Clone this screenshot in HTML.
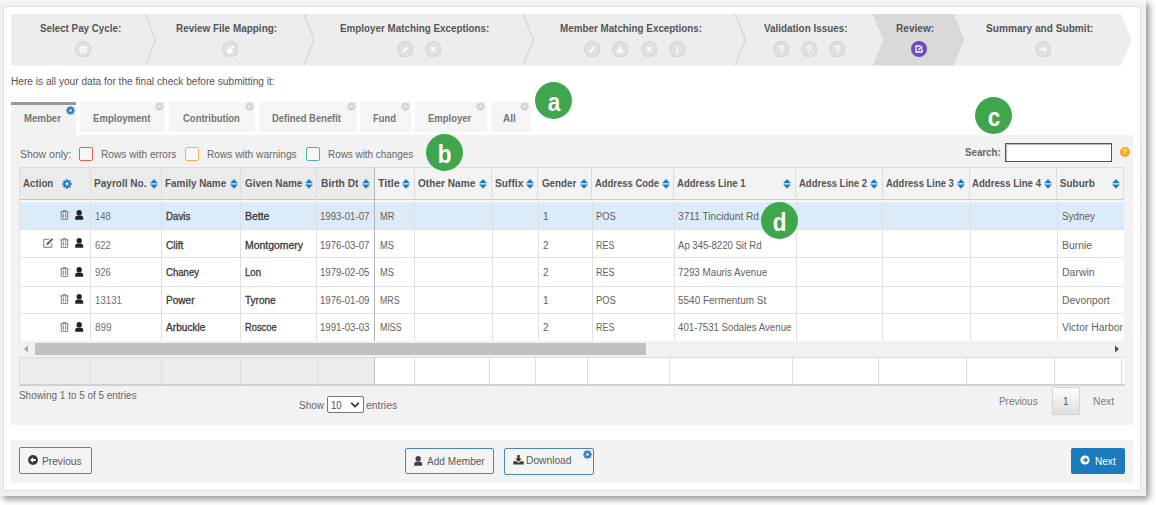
<!DOCTYPE html><html><head><meta charset="utf-8"><style>
*{box-sizing:border-box}
html,body{margin:0;padding:0}
body{width:1156px;height:505px;overflow:hidden;background:#fff;position:relative;font-family:"Liberation Sans",sans-serif;color:#555}
.a{position:absolute}
.t{position:absolute;white-space:nowrap;line-height:10px;font-size:10px}
.b{font-weight:bold}
</style></head><body><div class="a" style="left:0px;top:0px;width:1146px;height:496px;background:linear-gradient(#f9f9f9 0px,#f2f2f2 3.5px,#f1f1f1 6px);box-shadow:3px 3px 7px rgba(0,0,0,.45)"></div>
<div class="a" style="left:3px;top:6px;width:1138px;height:485px;background:#fff;border:1px solid #e0e0e0"></div>
<svg class="a" style="left:0;top:0" width="1156" height="80"><polygon points="11,14 1121.2,14 1131.6,39.75 1121.2,65.5 11,65.5" fill="#ededed"/><polygon points="872.8,14 954,14 964.3,39.75 954,65.5 872.8,65.5 883.1,39.75" fill="#d9d9d9"/><polyline points="145.2,14 155.5,39.75 145.2,65.5" fill="none" stroke="#cfcfcf" stroke-width="1"/><polyline points="303.9,14 314.2,39.75 303.9,65.5" fill="none" stroke="#cfcfcf" stroke-width="1"/><polyline points="523.1,14 533.4,39.75 523.1,65.5" fill="none" stroke="#cfcfcf" stroke-width="1"/><polyline points="735.2,14 745.5,39.75 735.2,65.5" fill="none" stroke="#cfcfcf" stroke-width="1"/></svg>
<div class="t" style="left:39.6px;top:24.2px;font-size:10px;line-height:10px;font-weight:bold;color:#555;transform:scaleX(0.9803);transform-origin:0 0;">Select Pay Cycle:</div>
<div class="t" style="left:175.9px;top:24.2px;font-size:10px;line-height:10px;font-weight:bold;color:#555;transform:scaleX(0.9942);transform-origin:0 0;">Review File Mapping:</div>
<div class="t" style="left:340.4px;top:24.2px;font-size:10px;line-height:10px;font-weight:bold;color:#555;transform:scaleX(0.9835);transform-origin:0 0;">Employer Matching Exceptions:</div>
<div class="t" style="left:559.9px;top:24.2px;font-size:10px;line-height:10px;font-weight:bold;color:#555;transform:scaleX(0.9836);transform-origin:0 0;">Member Matching Exceptions:</div>
<div class="t" style="left:763.9px;top:24.2px;font-size:10px;line-height:10px;font-weight:bold;color:#555;transform:scaleX(0.9883);transform-origin:0 0;">Validation Issues:</div>
<div class="t" style="left:896.4px;top:24.2px;font-size:10px;line-height:10px;font-weight:bold;color:#555;transform:scaleX(1.0080);transform-origin:0 0;">Review:</div>
<div class="t" style="left:985.9px;top:24.2px;font-size:10px;line-height:10px;font-weight:bold;color:#555;transform:scaleX(1.0119);transform-origin:0 0;">Summary and Submit:</div>
<svg class="a" style="left:75.25px;top:40.65px" width="16.5" height="16.5" viewBox="-0.25 -0.25 16.5 16.5"><circle cx="8" cy="8" r="7.7" fill="#e0e0e0" stroke="#d4d4d4" stroke-width="1.1"/><rect x="4.5" y="5" width="7" height="6.5" fill="#fff"/><path d="M4.5 7.3h7M6.8 7.3v4.2M9.2 7.3v4.2M4.5 9.4h7" stroke="#e1e1e1" stroke-width="0.6"/></svg>
<svg class="a" style="left:221.75px;top:40.65px" width="16.5" height="16.5" viewBox="-0.25 -0.25 16.5 16.5"><circle cx="8" cy="8" r="7.7" fill="#e0e0e0" stroke="#d4d4d4" stroke-width="1.1"/><path d="M5 11.5l2-2M6.5 10.5l-1-1 1.5-3 3.5 3.5-3 1.5zM9 6l1.5-1.5M10 7l1.5-1.5" stroke="#fff" stroke-width="1.3" fill="#fff"/></svg>
<svg class="a" style="left:396.85px;top:40.65px" width="16.5" height="16.5" viewBox="-0.25 -0.25 16.5 16.5"><circle cx="8" cy="8" r="7.7" fill="#e0e0e0" stroke="#d4d4d4" stroke-width="1.1"/><path d="M5 11.2l0.5-2 4-4 1.5 1.5-4 4z" fill="#fff"/></svg>
<svg class="a" style="left:424.85px;top:40.65px" width="16.5" height="16.5" viewBox="-0.25 -0.25 16.5 16.5"><circle cx="8" cy="8" r="7.7" fill="#e0e0e0" stroke="#d4d4d4" stroke-width="1.1"/><path d="M6 6l4 4M10 6l-4 4" stroke="#fff" stroke-width="1.5"/></svg>
<svg class="a" style="left:583.65px;top:40.65px" width="16.5" height="16.5" viewBox="-0.25 -0.25 16.5 16.5"><circle cx="8" cy="8" r="7.7" fill="#e0e0e0" stroke="#d4d4d4" stroke-width="1.1"/><path d="M5 11.2l0.5-2 4-4 1.5 1.5-4 4z" fill="#fff"/></svg>
<svg class="a" style="left:611.95px;top:40.65px" width="16.5" height="16.5" viewBox="-0.25 -0.25 16.5 16.5"><circle cx="8" cy="8" r="7.7" fill="#e0e0e0" stroke="#d4d4d4" stroke-width="1.1"/><path d="M8 4.5l3.8 6.8H4.2z" fill="#fff"/><path d="M8 7v2" stroke="#e1e1e1" stroke-width="0.9"/></svg>
<svg class="a" style="left:640.55px;top:40.65px" width="16.5" height="16.5" viewBox="-0.25 -0.25 16.5 16.5"><circle cx="8" cy="8" r="7.7" fill="#e0e0e0" stroke="#d4d4d4" stroke-width="1.1"/><path d="M6 6l4 4M10 6l-4 4" stroke="#fff" stroke-width="1.5"/></svg>
<svg class="a" style="left:669.05px;top:40.65px" width="16.5" height="16.5" viewBox="-0.25 -0.25 16.5 16.5"><circle cx="8" cy="8" r="7.7" fill="#e0e0e0" stroke="#d4d4d4" stroke-width="1.1"/><circle cx="8" cy="5.3" r="0.9" fill="#fff"/><rect x="7.2" y="7" width="1.6" height="4.5" fill="#fff"/></svg>
<svg class="a" style="left:772.85px;top:40.65px" width="16.5" height="16.5" viewBox="-0.25 -0.25 16.5 16.5"><circle cx="8" cy="8" r="7.7" fill="#e0e0e0" stroke="#d4d4d4" stroke-width="1.1"/><path d="M6.4 6.6a1.7 1.7 0 1 1 2.4 1.5c-0.6 0.3-0.8 0.6-0.8 1.2" fill="none" stroke="#fff" stroke-width="1.3"/><circle cx="8" cy="11" r="0.8" fill="#fff"/></svg>
<svg class="a" style="left:800.95px;top:40.65px" width="16.5" height="16.5" viewBox="-0.25 -0.25 16.5 16.5"><circle cx="8" cy="8" r="7.7" fill="#e0e0e0" stroke="#d4d4d4" stroke-width="1.1"/><path d="M6.4 6.6a1.7 1.7 0 1 1 2.4 1.5c-0.6 0.3-0.8 0.6-0.8 1.2" fill="none" stroke="#fff" stroke-width="1.3"/><circle cx="8" cy="11" r="0.8" fill="#fff"/></svg>
<svg class="a" style="left:828.95px;top:40.65px" width="16.5" height="16.5" viewBox="-0.25 -0.25 16.5 16.5"><circle cx="8" cy="8" r="7.7" fill="#e0e0e0" stroke="#d4d4d4" stroke-width="1.1"/><path d="M6.4 6.6a1.7 1.7 0 1 1 2.4 1.5c-0.6 0.3-0.8 0.6-0.8 1.2" fill="none" stroke="#fff" stroke-width="1.3"/><circle cx="8" cy="11" r="0.8" fill="#fff"/></svg>
<svg class="a" style="left:1034.85px;top:40.65px" width="16.5" height="16.5" viewBox="-0.25 -0.25 16.5 16.5"><circle cx="8" cy="8" r="7.7" fill="#e0e0e0" stroke="#d4d4d4" stroke-width="1.1"/><path d="M4.5 8h6M8.5 6l2 2-2 2" fill="none" stroke="#fff" stroke-width="1.5"/></svg>
<svg class="a" style="left:910.8px;top:41px" width="16" height="16" viewBox="0 0 16 16"><circle cx="8" cy="8" r="8" fill="#6a4dc4"/><path d="M9.5 5H5v6h6V7.5" fill="none" stroke="#fff" stroke-width="1.3"/><path d="M7 9.5l0.4-1.4 3.4-3.4 1 1-3.4 3.4z" fill="#fff"/></svg>
<div class="t" style="left:11.3px;top:77.2px;font-size:10px;line-height:10px;color:#555;transform:scaleX(1.0137);transform-origin:0 0;">Here is all your data for the final check before submitting it:</div>
<div class="a" style="left:11px;top:101.7px;width:65px;height:3px;background:#999"></div>
<div class="a" style="left:11px;top:104.7px;width:65px;height:31px;background:#f2f2f2"></div>
<div class="a" style="left:80px;top:102px;width:85px;height:30px;background:#f5f5f5"></div>
<div class="a" style="left:154.7px;top:102.2px;line-height:0"><svg width="9" height="9" viewBox="0 0 10 10"><g fill="#d2d2d2"><circle cx="5" cy="5" r="3.6"/><rect x="4" y="0.2" width="2" height="9.6" transform="rotate(0 5 5)"/><rect x="4" y="0.2" width="2" height="9.6" transform="rotate(45 5 5)"/><rect x="4" y="0.2" width="2" height="9.6" transform="rotate(90 5 5)"/><rect x="4" y="0.2" width="2" height="9.6" transform="rotate(135 5 5)"/></g><circle cx="5" cy="5" r="1.5" fill="#f5f5f5"/></svg></div>
<div class="a" style="left:169px;top:102px;width:86px;height:30px;background:#f5f5f5"></div>
<div class="a" style="left:244.7px;top:102.2px;line-height:0"><svg width="9" height="9" viewBox="0 0 10 10"><g fill="#d2d2d2"><circle cx="5" cy="5" r="3.6"/><rect x="4" y="0.2" width="2" height="9.6" transform="rotate(0 5 5)"/><rect x="4" y="0.2" width="2" height="9.6" transform="rotate(45 5 5)"/><rect x="4" y="0.2" width="2" height="9.6" transform="rotate(90 5 5)"/><rect x="4" y="0.2" width="2" height="9.6" transform="rotate(135 5 5)"/></g><circle cx="5" cy="5" r="1.5" fill="#f5f5f5"/></svg></div>
<div class="a" style="left:259px;top:102px;width:98px;height:30px;background:#f5f5f5"></div>
<div class="a" style="left:346.7px;top:102.2px;line-height:0"><svg width="9" height="9" viewBox="0 0 10 10"><g fill="#d2d2d2"><circle cx="5" cy="5" r="3.6"/><rect x="4" y="0.2" width="2" height="9.6" transform="rotate(0 5 5)"/><rect x="4" y="0.2" width="2" height="9.6" transform="rotate(45 5 5)"/><rect x="4" y="0.2" width="2" height="9.6" transform="rotate(90 5 5)"/><rect x="4" y="0.2" width="2" height="9.6" transform="rotate(135 5 5)"/></g><circle cx="5" cy="5" r="1.5" fill="#f5f5f5"/></svg></div>
<div class="a" style="left:360px;top:102px;width:51px;height:30px;background:#f5f5f5"></div>
<div class="a" style="left:400.7px;top:102.2px;line-height:0"><svg width="9" height="9" viewBox="0 0 10 10"><g fill="#d2d2d2"><circle cx="5" cy="5" r="3.6"/><rect x="4" y="0.2" width="2" height="9.6" transform="rotate(0 5 5)"/><rect x="4" y="0.2" width="2" height="9.6" transform="rotate(45 5 5)"/><rect x="4" y="0.2" width="2" height="9.6" transform="rotate(90 5 5)"/><rect x="4" y="0.2" width="2" height="9.6" transform="rotate(135 5 5)"/></g><circle cx="5" cy="5" r="1.5" fill="#f5f5f5"/></svg></div>
<div class="a" style="left:414.5px;top:102px;width:72px;height:30px;background:#f5f5f5"></div>
<div class="a" style="left:476.2px;top:102.2px;line-height:0"><svg width="9" height="9" viewBox="0 0 10 10"><g fill="#d2d2d2"><circle cx="5" cy="5" r="3.6"/><rect x="4" y="0.2" width="2" height="9.6" transform="rotate(0 5 5)"/><rect x="4" y="0.2" width="2" height="9.6" transform="rotate(45 5 5)"/><rect x="4" y="0.2" width="2" height="9.6" transform="rotate(90 5 5)"/><rect x="4" y="0.2" width="2" height="9.6" transform="rotate(135 5 5)"/></g><circle cx="5" cy="5" r="1.5" fill="#f5f5f5"/></svg></div>
<div class="a" style="left:490.5px;top:102px;width:40px;height:30px;background:#f5f5f5"></div>
<div class="a" style="left:520.2px;top:102.2px;line-height:0"><svg width="9" height="9" viewBox="0 0 10 10"><g fill="#d2d2d2"><circle cx="5" cy="5" r="3.6"/><rect x="4" y="0.2" width="2" height="9.6" transform="rotate(0 5 5)"/><rect x="4" y="0.2" width="2" height="9.6" transform="rotate(45 5 5)"/><rect x="4" y="0.2" width="2" height="9.6" transform="rotate(90 5 5)"/><rect x="4" y="0.2" width="2" height="9.6" transform="rotate(135 5 5)"/></g><circle cx="5" cy="5" r="1.5" fill="#f5f5f5"/></svg></div>
<div class="t" style="left:24.4px;top:114.2px;font-size:10px;line-height:10px;font-weight:bold;color:#767676;transform:scaleX(0.9620);transform-origin:0 0;">Member</div>
<div class="t" style="left:93.30000000000001px;top:114.2px;font-size:10px;line-height:10px;font-weight:bold;color:#767676;transform:scaleX(0.9564);transform-origin:0 0;">Employment</div>
<div class="t" style="left:182.70000000000002px;top:114.2px;font-size:10px;line-height:10px;font-weight:bold;color:#767676;transform:scaleX(0.9486);transform-origin:0 0;">Contribution</div>
<div class="t" style="left:272.4px;top:114.2px;font-size:10px;line-height:10px;font-weight:bold;color:#767676;transform:scaleX(0.9408);transform-origin:0 0;">Defined Benefit</div>
<div class="t" style="left:373.09999999999997px;top:114.2px;font-size:10px;line-height:10px;font-weight:bold;color:#767676;transform:scaleX(0.9412);transform-origin:0 0;">Fund</div>
<div class="t" style="left:428.09999999999997px;top:114.2px;font-size:10px;line-height:10px;font-weight:bold;color:#767676;transform:scaleX(0.9500);transform-origin:0 0;">Employer</div>
<div class="t" style="left:503.09999999999997px;top:114.2px;font-size:10px;line-height:10px;font-weight:bold;color:#767676;transform:scaleX(1.0015);transform-origin:0 0;">All</div>
<div class="a" style="left:65.8px;top:106.2px;line-height:0"><svg width="9" height="9" viewBox="0 0 10 10"><g fill="#2a7fc4"><circle cx="5" cy="5" r="3.6"/><rect x="4" y="0.2" width="2" height="9.6" transform="rotate(0 5 5)"/><rect x="4" y="0.2" width="2" height="9.6" transform="rotate(45 5 5)"/><rect x="4" y="0.2" width="2" height="9.6" transform="rotate(90 5 5)"/><rect x="4" y="0.2" width="2" height="9.6" transform="rotate(135 5 5)"/></g><circle cx="5" cy="5" r="1.5" fill="#f2f2f2"/></svg></div>
<div class="a" style="left:11px;top:135px;width:1122px;height:290px;background:#f2f2f2"></div>
<div class="a" style="left:11px;top:439.5px;width:1122px;height:43px;background:#f2f2f2"></div>
<div class="t" style="left:19.5px;top:150px;font-size:10px;line-height:10px;color:#666;transform:scaleX(1.0466);transform-origin:0 0;">Show only:</div>
<div class="a" style="left:79px;top:146.5px;width:14px;height:14px;border:1px solid #e0625c;border-radius:2px;background:#f7f7f7"></div>
<div class="t" style="left:101.2px;top:150px;font-size:10px;line-height:10px;color:#666;transform:scaleX(1.0125);transform-origin:0 0;">Rows with errors</div>
<div class="a" style="left:185.2px;top:146.5px;width:14px;height:14px;border:1px solid #f5b642;border-radius:2px;background:#f7f7f7"></div>
<div class="t" style="left:207.3px;top:150px;font-size:10px;line-height:10px;color:#666;transform:scaleX(1.0150);transform-origin:0 0;">Rows with warnings</div>
<div class="a" style="left:306px;top:146.5px;width:14px;height:14px;border:1px solid #4fb5a0;border-radius:2px;background:#f7f7f7"></div>
<div class="t" style="left:327.7px;top:150px;font-size:10px;line-height:10px;color:#666;transform:scaleX(0.9901);transform-origin:0 0;">Rows with changes</div>
<div class="t" style="left:965px;top:148px;font-size:10px;line-height:10px;font-weight:bold;color:#666;transform:scaleX(0.9731);transform-origin:0 0;">Search:</div>
<div class="a" style="left:1005px;top:143px;width:107px;height:19px;background:#fff;border:1px solid #555;box-shadow:inset 1px 1px 1px rgba(0,0,0,.3)"></div>
<div class="a" style="left:1120px;top:147px;width:10px;height:10px;border-radius:50%;background:#f8a91c;color:#fff;font:bold 8px/10px 'Liberation Sans';text-align:center">?</div>
<div class="a" style="left:19px;top:167px;width:355px;height:33px;background:#ebebeb"></div>
<div class="a" style="left:374px;top:167px;width:750px;height:33px;background:#f3f3f3"></div>
<div class="a" style="left:19px;top:167px;width:1105px;height:1px;background:#dcdcdc"></div>
<div class="a" style="left:19px;top:198.8px;width:1105px;height:1.7px;background:#c9c9c9"></div>
<div class="a" style="left:19px;top:200.5px;width:1105px;height:140.5px;background:#fff"></div>
<div class="a" style="left:19px;top:202px;width:1105px;height:27px;background:#dcebf8"></div>
<div class="a" style="left:19px;top:229px;width:1105px;height:1px;background:#e2e2e2"></div>
<div class="a" style="left:19px;top:257px;width:1105px;height:1px;background:#e2e2e2"></div>
<div class="a" style="left:19px;top:286px;width:1105px;height:1px;background:#e2e2e2"></div>
<div class="a" style="left:19px;top:313px;width:1105px;height:1px;background:#e2e2e2"></div>
<div class="a" style="left:19px;top:167px;width:1px;height:33px;background:#dddddd"></div>
<div class="a" style="left:90px;top:167px;width:1px;height:33px;background:#dddddd"></div>
<div class="a" style="left:161px;top:167px;width:1px;height:33px;background:#dddddd"></div>
<div class="a" style="left:240px;top:167px;width:1px;height:33px;background:#dddddd"></div>
<div class="a" style="left:316px;top:167px;width:1px;height:33px;background:#dddddd"></div>
<div class="a" style="left:374px;top:167px;width:1px;height:33px;background:#dddddd"></div>
<div class="a" style="left:414px;top:167px;width:1px;height:33px;background:#dddddd"></div>
<div class="a" style="left:491px;top:167px;width:1px;height:33px;background:#dddddd"></div>
<div class="a" style="left:537px;top:167px;width:1px;height:33px;background:#dddddd"></div>
<div class="a" style="left:591px;top:167px;width:1px;height:33px;background:#dddddd"></div>
<div class="a" style="left:673px;top:167px;width:1px;height:33px;background:#dddddd"></div>
<div class="a" style="left:795px;top:167px;width:1px;height:33px;background:#dddddd"></div>
<div class="a" style="left:882px;top:167px;width:1px;height:33px;background:#dddddd"></div>
<div class="a" style="left:969px;top:167px;width:1px;height:33px;background:#dddddd"></div>
<div class="a" style="left:1056px;top:167px;width:1px;height:33px;background:#dddddd"></div>
<div class="a" style="left:19px;top:200.5px;width:1px;height:140.5px;background:#e0e0e0"></div>
<div class="a" style="left:90px;top:200.5px;width:1px;height:140.5px;background:#e0e0e0"></div>
<div class="a" style="left:161px;top:200.5px;width:1px;height:140.5px;background:#e0e0e0"></div>
<div class="a" style="left:240px;top:200.5px;width:1px;height:140.5px;background:#e0e0e0"></div>
<div class="a" style="left:316px;top:200.5px;width:1px;height:140.5px;background:#e0e0e0"></div>
<div class="a" style="left:374px;top:200.5px;width:1px;height:140.5px;background:#e0e0e0"></div>
<div class="a" style="left:414px;top:200.5px;width:1px;height:140.5px;background:#e0e0e0"></div>
<div class="a" style="left:492px;top:200.5px;width:1px;height:140.5px;background:#e0e0e0"></div>
<div class="a" style="left:538px;top:200.5px;width:1px;height:140.5px;background:#e0e0e0"></div>
<div class="a" style="left:592px;top:200.5px;width:1px;height:140.5px;background:#e0e0e0"></div>
<div class="a" style="left:673.5px;top:200.5px;width:1px;height:140.5px;background:#e0e0e0"></div>
<div class="a" style="left:796px;top:200.5px;width:1px;height:140.5px;background:#e0e0e0"></div>
<div class="a" style="left:882px;top:200.5px;width:1px;height:140.5px;background:#e0e0e0"></div>
<div class="a" style="left:969.5px;top:200.5px;width:1px;height:140.5px;background:#e0e0e0"></div>
<div class="a" style="left:1056.5px;top:200.5px;width:1px;height:140.5px;background:#e0e0e0"></div>
<div class="a" style="left:373.5px;top:167px;width:1.5px;height:174px;background:#b5b5b5"></div>
<div class="a" style="left:1123px;top:167px;width:1px;height:33px;background:#dddddd"></div>
<div class="t" style="left:23.3px;top:179px;font-size:10px;line-height:10px;font-weight:bold;color:#555;transform:scaleX(0.9740);transform-origin:0 0;">Action</div>
<div class="t" style="left:94.2px;top:179px;font-size:10px;line-height:10px;font-weight:bold;color:#555;transform:scaleX(1.0057);transform-origin:0 0;">Payroll No.</div>
<div class="a" style="left:149.7px;top:178.5px;width:8px;height:10px;line-height:0"><svg width="8" height="10" viewBox="0 0 8 10"><polygon points="0,4.2 4,0 8,4.2" fill="#1f7dc4"/><polygon points="0,5.5 8,5.5 4,9.7" fill="#1f7dc4"/></svg></div>
<div class="t" style="left:165.1px;top:179px;font-size:10px;line-height:10px;font-weight:bold;color:#555;transform:scaleX(0.9918);transform-origin:0 0;">Family Name</div>
<div class="a" style="left:229.6px;top:178.5px;width:8px;height:10px;line-height:0"><svg width="8" height="10" viewBox="0 0 8 10"><polygon points="0,4.2 4,0 8,4.2" fill="#1f7dc4"/><polygon points="0,5.5 8,5.5 4,9.7" fill="#1f7dc4"/></svg></div>
<div class="t" style="left:245.1px;top:179px;font-size:10px;line-height:10px;font-weight:bold;color:#555;transform:scaleX(0.9894);transform-origin:0 0;">Given Name</div>
<div class="a" style="left:305.4px;top:178.5px;width:8px;height:10px;line-height:0"><svg width="8" height="10" viewBox="0 0 8 10"><polygon points="0,4.2 4,0 8,4.2" fill="#1f7dc4"/><polygon points="0,5.5 8,5.5 4,9.7" fill="#1f7dc4"/></svg></div>
<div class="t" style="left:320.9px;top:179px;font-size:10px;line-height:10px;font-weight:bold;color:#555;transform:scaleX(1.0226);transform-origin:0 0;">Birth Dt</div>
<div class="a" style="left:362.4px;top:178.5px;width:8px;height:10px;line-height:0"><svg width="8" height="10" viewBox="0 0 8 10"><polygon points="0,4.2 4,0 8,4.2" fill="#1f7dc4"/><polygon points="0,5.5 8,5.5 4,9.7" fill="#1f7dc4"/></svg></div>
<div class="t" style="left:378.1px;top:179px;font-size:10px;line-height:10px;font-weight:bold;color:#555;transform:scaleX(1.0691);transform-origin:0 0;">Title</div>
<div class="a" style="left:402.4px;top:178.5px;width:8px;height:10px;line-height:0"><svg width="8" height="10" viewBox="0 0 8 10"><polygon points="0,4.2 4,0 8,4.2" fill="#1f7dc4"/><polygon points="0,5.5 8,5.5 4,9.7" fill="#1f7dc4"/></svg></div>
<div class="t" style="left:418.4px;top:179px;font-size:10px;line-height:10px;font-weight:bold;color:#555;transform:scaleX(1.0108);transform-origin:0 0;">Other Name</div>
<div class="a" style="left:479.2px;top:178.5px;width:8px;height:10px;line-height:0"><svg width="8" height="10" viewBox="0 0 8 10"><polygon points="0,4.2 4,0 8,4.2" fill="#1f7dc4"/><polygon points="0,5.5 8,5.5 4,9.7" fill="#1f7dc4"/></svg></div>
<div class="t" style="left:494.9px;top:179px;font-size:10px;line-height:10px;font-weight:bold;color:#555;transform:scaleX(1.0187);transform-origin:0 0;">Suffix</div>
<div class="a" style="left:526px;top:178.5px;width:8px;height:10px;line-height:0"><svg width="8" height="10" viewBox="0 0 8 10"><polygon points="0,4.2 4,0 8,4.2" fill="#1f7dc4"/><polygon points="0,5.5 8,5.5 4,9.7" fill="#1f7dc4"/></svg></div>
<div class="t" style="left:541.6px;top:179px;font-size:10px;line-height:10px;font-weight:bold;color:#555;transform:scaleX(0.9796);transform-origin:0 0;">Gender</div>
<div class="a" style="left:579.5px;top:178.5px;width:8px;height:10px;line-height:0"><svg width="8" height="10" viewBox="0 0 8 10"><polygon points="0,4.2 4,0 8,4.2" fill="#1f7dc4"/><polygon points="0,5.5 8,5.5 4,9.7" fill="#1f7dc4"/></svg></div>
<div class="t" style="left:595.1px;top:179px;font-size:10px;line-height:10px;font-weight:bold;color:#555;transform:scaleX(0.9440);transform-origin:0 0;">Address Code</div>
<div class="a" style="left:661.6px;top:178.5px;width:8px;height:10px;line-height:0"><svg width="8" height="10" viewBox="0 0 8 10"><polygon points="0,4.2 4,0 8,4.2" fill="#1f7dc4"/><polygon points="0,5.5 8,5.5 4,9.7" fill="#1f7dc4"/></svg></div>
<div class="t" style="left:677.1px;top:179px;font-size:10px;line-height:10px;font-weight:bold;color:#555;transform:scaleX(0.9567);transform-origin:0 0;">Address Line 1</div>
<div class="a" style="left:783px;top:178.5px;width:8px;height:10px;line-height:0"><svg width="8" height="10" viewBox="0 0 8 10"><polygon points="0,4.2 4,0 8,4.2" fill="#1f7dc4"/><polygon points="0,5.5 8,5.5 4,9.7" fill="#1f7dc4"/></svg></div>
<div class="t" style="left:798.5px;top:179px;font-size:10px;line-height:10px;font-weight:bold;color:#555;transform:scaleX(0.9484);transform-origin:0 0;">Address Line 2</div>
<div class="a" style="left:870.2px;top:178.5px;width:8px;height:10px;line-height:0"><svg width="8" height="10" viewBox="0 0 8 10"><polygon points="0,4.2 4,0 8,4.2" fill="#1f7dc4"/><polygon points="0,5.5 8,5.5 4,9.7" fill="#1f7dc4"/></svg></div>
<div class="t" style="left:885.9px;top:179px;font-size:10px;line-height:10px;font-weight:bold;color:#555;transform:scaleX(0.9470);transform-origin:0 0;">Address Line 3</div>
<div class="a" style="left:957.1px;top:178.5px;width:8px;height:10px;line-height:0"><svg width="8" height="10" viewBox="0 0 8 10"><polygon points="0,4.2 4,0 8,4.2" fill="#1f7dc4"/><polygon points="0,5.5 8,5.5 4,9.7" fill="#1f7dc4"/></svg></div>
<div class="t" style="left:972.3px;top:179px;font-size:10px;line-height:10px;font-weight:bold;color:#555;transform:scaleX(0.9623);transform-origin:0 0;">Address Line 4</div>
<div class="a" style="left:1044px;top:178.5px;width:8px;height:10px;line-height:0"><svg width="8" height="10" viewBox="0 0 8 10"><polygon points="0,4.2 4,0 8,4.2" fill="#1f7dc4"/><polygon points="0,5.5 8,5.5 4,9.7" fill="#1f7dc4"/></svg></div>
<div class="t" style="left:1059.8px;top:179px;font-size:10px;line-height:10px;font-weight:bold;color:#555;transform:scaleX(1.0000);transform-origin:0 0;">Suburb</div>
<div class="a" style="left:1111.5px;top:178.5px;width:8px;height:10px;line-height:0"><svg width="8" height="10" viewBox="0 0 8 10"><polygon points="0,4.2 4,0 8,4.2" fill="#1f7dc4"/><polygon points="0,5.5 8,5.5 4,9.7" fill="#1f7dc4"/></svg></div>
<div class="a" style="left:62px;top:179px;width:10px;height:10px;line-height:0"><svg width="10" height="10" viewBox="0 0 10 10"><g fill="#2a7fc4"><circle cx="5" cy="5" r="3.6"/><rect x="4" y="0.2" width="2" height="9.6" transform="rotate(0 5 5)"/><rect x="4" y="0.2" width="2" height="9.6" transform="rotate(45 5 5)"/><rect x="4" y="0.2" width="2" height="9.6" transform="rotate(90 5 5)"/><rect x="4" y="0.2" width="2" height="9.6" transform="rotate(135 5 5)"/></g><circle cx="5" cy="5" r="1.4" fill="#fff"/></svg></div>
<div class="a" style="left:60.2px;top:210.4px;line-height:0"><svg width="9" height="10" viewBox="0 0 9 10"><g fill="none" stroke="#6f6f6f" stroke-width="0.9"><path d="M0.3 1.9h8.4M3 1.9V0.6h3v1.3M1.3 1.9v7.2c0 0.3 0.2 0.5 0.5 0.5h5.4c0.3 0 0.5-0.2 0.5-0.5V1.9M3.3 3.4v4.8M5.7 3.4v4.8"/></g></svg></div>
<div class="a" style="left:74.6px;top:210.4px;line-height:0"><svg width="9" height="10" viewBox="0 0 9 10"><circle cx="4.2" cy="2.7" r="2.65" fill="#222"/><path d="M0.2 9.8V7.8C0.2 6.3 1.3 5.4 2.8 5.4h2.8c1.5 0 2.6 0.9 2.6 2.4v2z" fill="#222"/></svg></div>
<div class="t" style="left:94.5px;top:212px;font-size:10px;line-height:10px;color:#6e6e6e;transform:scaleX(0.9468);transform-origin:0 0;">148</div>
<div class="t" style="left:166.1px;top:212px;font-size:10px;line-height:10px;color:#3a3a3a;transform:scaleX(0.9754);transform-origin:0 0;-webkit-text-stroke:0.3px #3a3a3a;">Davis</div>
<div class="t" style="left:244.8px;top:212px;font-size:10px;line-height:10px;color:#3a3a3a;transform:scaleX(1.0403);transform-origin:0 0;-webkit-text-stroke:0.3px #3a3a3a;">Bette</div>
<div class="t" style="left:320.1px;top:212px;font-size:10px;line-height:10px;color:#626262;transform:scaleX(0.9657);transform-origin:0 0;">1993-01-07</div>
<div class="t" style="left:379.5px;top:212px;font-size:10px;line-height:10px;color:#626262;transform:scaleX(0.9253);transform-origin:0 0;">MR</div>
<div class="t" style="left:543px;top:212px;font-size:10px;line-height:10px;color:#626262;">1</div>
<div class="t" style="left:595.8px;top:212px;font-size:10px;line-height:10px;color:#626262;transform:scaleX(0.9325);transform-origin:0 0;">POS</div>
<div class="t" style="left:678.1px;top:212px;font-size:10px;line-height:10px;color:#626262;transform:scaleX(1.0141);transform-origin:0 0;">3711 Tincidunt Rd</div>
<div class="t" style="left:1061.8px;top:212px;font-size:10px;line-height:10px;color:#626262;transform:scaleX(0.9892);transform-origin:0 0;">Sydney</div>
<div class="a" style="left:60.2px;top:238.2px;line-height:0"><svg width="9" height="10" viewBox="0 0 9 10"><g fill="none" stroke="#6f6f6f" stroke-width="0.9"><path d="M0.3 1.9h8.4M3 1.9V0.6h3v1.3M1.3 1.9v7.2c0 0.3 0.2 0.5 0.5 0.5h5.4c0.3 0 0.5-0.2 0.5-0.5V1.9M3.3 3.4v4.8M5.7 3.4v4.8"/></g></svg></div>
<div class="a" style="left:74.6px;top:238.2px;line-height:0"><svg width="9" height="10" viewBox="0 0 9 10"><circle cx="4.2" cy="2.7" r="2.65" fill="#222"/><path d="M0.2 9.8V7.8C0.2 6.3 1.3 5.4 2.8 5.4h2.8c1.5 0 2.6 0.9 2.6 2.4v2z" fill="#222"/></svg></div>
<div class="a" style="left:43.2px;top:238.2px;line-height:0"><svg width="11" height="10" viewBox="0 0 11 10"><path d="M6 1.3H0.8v8h8V5.5" fill="none" stroke="#7a7a7a" stroke-width="1"/><path d="M3.2 7.2l0.5-2L8.9 0l1.5 1.5L5.2 6.7Z" fill="#6a6a6a"/></svg></div>
<div class="t" style="left:94.5px;top:241px;font-size:10px;line-height:10px;color:#6e6e6e;transform:scaleX(0.9468);transform-origin:0 0;">622</div>
<div class="t" style="left:166.1px;top:241px;font-size:10px;line-height:10px;color:#3a3a3a;transform:scaleX(1.0096);transform-origin:0 0;-webkit-text-stroke:0.3px #3a3a3a;">Clift</div>
<div class="t" style="left:244.8px;top:241px;font-size:10px;line-height:10px;color:#3a3a3a;transform:scaleX(1.0436);transform-origin:0 0;-webkit-text-stroke:0.3px #3a3a3a;">Montgomery</div>
<div class="t" style="left:320.1px;top:241px;font-size:10px;line-height:10px;color:#626262;transform:scaleX(0.9657);transform-origin:0 0;">1976-03-07</div>
<div class="t" style="left:379.5px;top:241px;font-size:10px;line-height:10px;color:#626262;transform:scaleX(0.9267);transform-origin:0 0;">MS</div>
<div class="t" style="left:543px;top:241px;font-size:10px;line-height:10px;color:#626262;">2</div>
<div class="t" style="left:595.8px;top:241px;font-size:10px;line-height:10px;color:#626262;transform:scaleX(0.8948);transform-origin:0 0;">RES</div>
<div class="t" style="left:678.1px;top:241px;font-size:10px;line-height:10px;color:#626262;transform:scaleX(0.9567);transform-origin:0 0;">Ap 345-8220 Sit Rd</div>
<div class="t" style="left:1061.8px;top:241px;font-size:10px;line-height:10px;color:#626262;transform:scaleX(1.0413);transform-origin:0 0;">Burnie</div>
<div class="a" style="left:60.2px;top:266.7px;line-height:0"><svg width="9" height="10" viewBox="0 0 9 10"><g fill="none" stroke="#6f6f6f" stroke-width="0.9"><path d="M0.3 1.9h8.4M3 1.9V0.6h3v1.3M1.3 1.9v7.2c0 0.3 0.2 0.5 0.5 0.5h5.4c0.3 0 0.5-0.2 0.5-0.5V1.9M3.3 3.4v4.8M5.7 3.4v4.8"/></g></svg></div>
<div class="a" style="left:74.6px;top:266.7px;line-height:0"><svg width="9" height="10" viewBox="0 0 9 10"><circle cx="4.2" cy="2.7" r="2.65" fill="#222"/><path d="M0.2 9.8V7.8C0.2 6.3 1.3 5.4 2.8 5.4h2.8c1.5 0 2.6 0.9 2.6 2.4v2z" fill="#222"/></svg></div>
<div class="t" style="left:94.5px;top:267.5px;font-size:10px;line-height:10px;color:#6e6e6e;transform:scaleX(0.9468);transform-origin:0 0;">926</div>
<div class="t" style="left:166.1px;top:267.5px;font-size:10px;line-height:10px;color:#3a3a3a;transform:scaleX(0.9574);transform-origin:0 0;-webkit-text-stroke:0.3px #3a3a3a;">Chaney</div>
<div class="t" style="left:244.8px;top:267.5px;font-size:10px;line-height:10px;color:#3a3a3a;transform:scaleX(0.9588);transform-origin:0 0;-webkit-text-stroke:0.3px #3a3a3a;">Lon</div>
<div class="t" style="left:320.1px;top:267.5px;font-size:10px;line-height:10px;color:#626262;transform:scaleX(0.9657);transform-origin:0 0;">1979-02-05</div>
<div class="t" style="left:379.5px;top:267.5px;font-size:10px;line-height:10px;color:#626262;transform:scaleX(0.9267);transform-origin:0 0;">MS</div>
<div class="t" style="left:543px;top:267.5px;font-size:10px;line-height:10px;color:#626262;">2</div>
<div class="t" style="left:595.8px;top:267.5px;font-size:10px;line-height:10px;color:#626262;transform:scaleX(0.8948);transform-origin:0 0;">RES</div>
<div class="t" style="left:678.1px;top:267.5px;font-size:10px;line-height:10px;color:#626262;transform:scaleX(0.9802);transform-origin:0 0;">7293 Mauris Avenue</div>
<div class="t" style="left:1061.8px;top:267.5px;font-size:10px;line-height:10px;color:#626262;transform:scaleX(1.0506);transform-origin:0 0;">Darwin</div>
<div class="a" style="left:60.2px;top:294.1px;line-height:0"><svg width="9" height="10" viewBox="0 0 9 10"><g fill="none" stroke="#6f6f6f" stroke-width="0.9"><path d="M0.3 1.9h8.4M3 1.9V0.6h3v1.3M1.3 1.9v7.2c0 0.3 0.2 0.5 0.5 0.5h5.4c0.3 0 0.5-0.2 0.5-0.5V1.9M3.3 3.4v4.8M5.7 3.4v4.8"/></g></svg></div>
<div class="a" style="left:74.6px;top:294.1px;line-height:0"><svg width="9" height="10" viewBox="0 0 9 10"><circle cx="4.2" cy="2.7" r="2.65" fill="#222"/><path d="M0.2 9.8V7.8C0.2 6.3 1.3 5.4 2.8 5.4h2.8c1.5 0 2.6 0.9 2.6 2.4v2z" fill="#222"/></svg></div>
<div class="t" style="left:94.5px;top:295.5px;font-size:10px;line-height:10px;color:#6e6e6e;transform:scaleX(0.9708);transform-origin:0 0;">13131</div>
<div class="t" style="left:166.1px;top:295.5px;font-size:10px;line-height:10px;color:#3a3a3a;transform:scaleX(1.0050);transform-origin:0 0;-webkit-text-stroke:0.3px #3a3a3a;">Power</div>
<div class="t" style="left:244.8px;top:295.5px;font-size:10px;line-height:10px;color:#3a3a3a;transform:scaleX(1.0007);transform-origin:0 0;-webkit-text-stroke:0.3px #3a3a3a;">Tyrone</div>
<div class="t" style="left:320.1px;top:295.5px;font-size:10px;line-height:10px;color:#626262;transform:scaleX(0.9657);transform-origin:0 0;">1976-01-09</div>
<div class="t" style="left:379.5px;top:295.5px;font-size:10px;line-height:10px;color:#626262;transform:scaleX(0.8815);transform-origin:0 0;">MRS</div>
<div class="t" style="left:543px;top:295.5px;font-size:10px;line-height:10px;color:#626262;">1</div>
<div class="t" style="left:595.8px;top:295.5px;font-size:10px;line-height:10px;color:#626262;transform:scaleX(0.9325);transform-origin:0 0;">POS</div>
<div class="t" style="left:678.1px;top:295.5px;font-size:10px;line-height:10px;color:#626262;transform:scaleX(0.9980);transform-origin:0 0;">5540 Fermentum St</div>
<div class="t" style="left:1061.8px;top:295.5px;font-size:10px;line-height:10px;color:#626262;transform:scaleX(1.0338);transform-origin:0 0;">Devonport</div>
<div class="a" style="left:60.2px;top:321.6px;line-height:0"><svg width="9" height="10" viewBox="0 0 9 10"><g fill="none" stroke="#6f6f6f" stroke-width="0.9"><path d="M0.3 1.9h8.4M3 1.9V0.6h3v1.3M1.3 1.9v7.2c0 0.3 0.2 0.5 0.5 0.5h5.4c0.3 0 0.5-0.2 0.5-0.5V1.9M3.3 3.4v4.8M5.7 3.4v4.8"/></g></svg></div>
<div class="a" style="left:74.6px;top:321.6px;line-height:0"><svg width="9" height="10" viewBox="0 0 9 10"><circle cx="4.2" cy="2.7" r="2.65" fill="#222"/><path d="M0.2 9.8V7.8C0.2 6.3 1.3 5.4 2.8 5.4h2.8c1.5 0 2.6 0.9 2.6 2.4v2z" fill="#222"/></svg></div>
<div class="t" style="left:94.5px;top:322.8px;font-size:10px;line-height:10px;color:#6e6e6e;transform:scaleX(0.9948);transform-origin:0 0;">899</div>
<div class="t" style="left:166.1px;top:322.8px;font-size:10px;line-height:10px;color:#3a3a3a;transform:scaleX(1.0127);transform-origin:0 0;-webkit-text-stroke:0.3px #3a3a3a;">Arbuckle</div>
<div class="t" style="left:244.8px;top:322.8px;font-size:10px;line-height:10px;color:#3a3a3a;transform:scaleX(0.9320);transform-origin:0 0;-webkit-text-stroke:0.3px #3a3a3a;">Roscoe</div>
<div class="t" style="left:320.1px;top:322.8px;font-size:10px;line-height:10px;color:#626262;transform:scaleX(0.9657);transform-origin:0 0;">1991-03-03</div>
<div class="t" style="left:379.5px;top:322.8px;font-size:10px;line-height:10px;color:#626262;transform:scaleX(0.8874);transform-origin:0 0;">MISS</div>
<div class="t" style="left:543px;top:322.8px;font-size:10px;line-height:10px;color:#626262;">2</div>
<div class="t" style="left:595.8px;top:322.8px;font-size:10px;line-height:10px;color:#626262;transform:scaleX(0.8948);transform-origin:0 0;">RES</div>
<div class="t" style="left:678.1px;top:322.8px;font-size:10px;line-height:10px;color:#626262;transform:scaleX(0.9681);transform-origin:0 0;">401-7531 Sodales Avenue</div>
<div class="t" style="left:1061.8px;top:322.8px;font-size:10px;line-height:10px;color:#626262;transform:scaleX(1.0386);transform-origin:0 0;">Victor Harbor</div>
<div class="a" style="left:19px;top:341px;width:1105px;height:16px;background:#f1f1f1"></div>
<div class="a" style="left:35px;top:343px;width:611px;height:12px;background:#c1c1c1"></div>
<svg class="a" style="left:22px;top:345px" width="8" height="8"><polygon points="6,0.5 6,7.5 2,4" fill="#a3a3a3"/></svg>
<svg class="a" style="left:1113px;top:345px" width="8" height="8"><polygon points="2,0.5 2,7.5 6,4" fill="#505050"/></svg>
<div class="a" style="left:19px;top:357px;width:355px;height:28px;background:#ececec"></div>
<div class="a" style="left:374px;top:357px;width:751px;height:28px;background:#fff"></div>
<div class="a" style="left:19px;top:357px;width:1106px;height:1px;background:#dddddd"></div>
<div class="a" style="left:19px;top:384px;width:1106px;height:2px;background:#d0d0d0"></div>
<div class="a" style="left:19px;top:357px;width:1px;height:28px;background:#dddddd"></div>
<div class="a" style="left:90px;top:357px;width:1px;height:28px;background:#dddddd"></div>
<div class="a" style="left:161px;top:357px;width:1px;height:28px;background:#dddddd"></div>
<div class="a" style="left:240px;top:357px;width:1px;height:28px;background:#dddddd"></div>
<div class="a" style="left:317px;top:357px;width:1px;height:28px;background:#dddddd"></div>
<div class="a" style="left:374px;top:357px;width:1px;height:28px;background:#dddddd"></div>
<div class="a" style="left:414px;top:357px;width:1px;height:28px;background:#dddddd"></div>
<div class="a" style="left:489px;top:357px;width:1px;height:28px;background:#dddddd"></div>
<div class="a" style="left:535px;top:357px;width:1px;height:28px;background:#dddddd"></div>
<div class="a" style="left:587px;top:357px;width:1px;height:28px;background:#dddddd"></div>
<div class="a" style="left:669px;top:357px;width:1px;height:28px;background:#dddddd"></div>
<div class="a" style="left:792px;top:357px;width:1px;height:28px;background:#dddddd"></div>
<div class="a" style="left:878px;top:357px;width:1px;height:28px;background:#dddddd"></div>
<div class="a" style="left:966px;top:357px;width:1px;height:28px;background:#dddddd"></div>
<div class="a" style="left:1054px;top:357px;width:1px;height:28px;background:#dddddd"></div>
<div class="a" style="left:1121px;top:357px;width:1px;height:28px;background:#dddddd"></div>
<div class="a" style="left:373.5px;top:357px;width:1.5px;height:28px;background:#bdbdbd"></div>
<div class="t" style="left:19.3px;top:391px;font-size:10px;line-height:10px;color:#666;transform:scaleX(0.9931);transform-origin:0 0;">Showing 1 to 5 of 5 entries</div>
<div class="t" style="left:299.3px;top:401.2px;font-size:10px;line-height:10px;color:#666;transform:scaleX(0.9954);transform-origin:0 0;">Show</div>
<div class="a" style="left:327px;top:396px;width:37px;height:17px;border:1px solid #777;border-radius:2px;background:#fff"></div>
<div class="t" style="left:330.5px;top:401.2px;font-size:10px;line-height:10px;color:#555;transform:scaleX(0.9618);transform-origin:0 0;">10</div>
<svg class="a" style="left:350px;top:400.8px" width="10" height="8"><path d="M1.2 1.8L5 5.6 8.8 1.8" fill="none" stroke="#333" stroke-width="1.8"/></svg>
<div class="t" style="left:365.7px;top:401.2px;font-size:10px;line-height:10px;color:#666;transform:scaleX(1.0361);transform-origin:0 0;">entries</div>
<div class="t" style="left:998.9px;top:397px;font-size:10px;line-height:10px;color:#7a7a7a;transform:scaleX(0.9921);transform-origin:0 0;">Previous</div>
<div class="a" style="left:1052px;top:387px;width:28px;height:28px;border:1px solid #d3d3d3;border-radius:1px;background:linear-gradient(#fefefe,#dedede)"></div>
<div class="t" style="left:1063px;top:397px;font-size:10px;line-height:10px;color:#555;">1</div>
<div class="t" style="left:1093px;top:397px;font-size:10px;line-height:10px;color:#7a7a7a;transform:scaleX(1.0261);transform-origin:0 0;">Next</div>
<div class="a" style="left:19px;top:447.3px;width:73px;height:26.3px;border:1.6px solid #4a87bb;border-radius:2px;background:#f4f4f4"></div>
<div class="t" style="left:42.1px;top:457px;font-size:10px;line-height:10px;color:#5a5a5a;transform:scaleX(1.0178);transform-origin:0 0;">Previous</div>
<svg class="a" style="left:28px;top:455px" width="10" height="10"><circle cx="5" cy="5" r="4.9" fill="#3a3a3a"/><path d="M2.2 5L5 2.3V4h2.6v2H5v1.7z" fill="#fff"/></svg>
<div class="a" style="left:405px;top:447.5px;width:89px;height:26px;border:1.6px solid #4a87bb;border-radius:2px;background:#f4f4f4"></div>
<div class="t" style="left:426.6px;top:457px;font-size:10px;line-height:10px;color:#5a5a5a;transform:scaleX(1.0079);transform-origin:0 0;">Add Member</div>
<div class="a" style="left:414px;top:456px;line-height:0"><svg width="9" height="10" viewBox="0 0 9 10"><circle cx="4.2" cy="2.7" r="2.65" fill="#444"/><path d="M0.2 9.8V7.8C0.2 6.3 1.3 5.4 2.8 5.4h2.8c1.5 0 2.6 0.9 2.6 2.4v2z" fill="#444"/></svg></div>
<div class="a" style="left:504px;top:447.5px;width:89.5px;height:27px;border:1.6px solid #4a87bb;border-radius:2px;background:#f4f4f4"></div>
<div class="t" style="left:525.8px;top:456.3px;font-size:10px;line-height:10px;color:#5a5a5a;transform:scaleX(1.0228);transform-origin:0 0;">Download</div>
<svg class="a" style="left:513px;top:454.5px" width="11" height="10"><path d="M4.3 0h2.4v3.6h2.1L5.5 6.9 2.2 3.6h2.1z" fill="#3a3a3a"/><path d="M0.3 6.2h3l2.2 1.8 2.2-1.8h3v3.3H0.3z" fill="#3a3a3a"/></svg>
<div class="a" style="left:582.8px;top:449.8px;width:9px;height:9px;line-height:0"><svg width="9" height="9" viewBox="0 0 10 10"><g fill="#2a7fc4"><circle cx="5" cy="5" r="3.6"/><rect x="4" y="0.2" width="2" height="9.6" transform="rotate(0 5 5)"/><rect x="4" y="0.2" width="2" height="9.6" transform="rotate(45 5 5)"/><rect x="4" y="0.2" width="2" height="9.6" transform="rotate(90 5 5)"/><rect x="4" y="0.2" width="2" height="9.6" transform="rotate(135 5 5)"/></g><circle cx="5" cy="5" r="1.4" fill="#fff"/></svg></div>
<div class="a" style="left:1071px;top:447.5px;width:54px;height:26.3px;background:#1b7bbd;border-radius:2px"></div>
<div class="t" style="left:1094.8px;top:456.6px;font-size:10px;line-height:10px;color:#fff;transform:scaleX(1.0067);transform-origin:0 0;">Next</div>
<svg class="a" style="left:1080px;top:455px" width="10" height="10"><circle cx="5" cy="5" r="4.6" fill="#fff"/><path d="M3.2 5H6.8M5 3l2 2-2 2" fill="none" stroke="#1b7bbd" stroke-width="1.4"/></svg>
<div class="a" style="left:535.0px;top:81.75px;width:37px;height:37px;border-radius:50%;background:#40a64e"></div>
<div class="a" style="left:535.0px;top:83.75px;width:37px;height:37px;color:#fff;font:bold 25px/37px 'Liberation Sans';text-align:center"><span style="display:inline-block;transform:scaleX(0.9)">a</span></div>
<div class="a" style="left:426.0px;top:133.75px;width:37px;height:37px;border-radius:50%;background:#40a64e"></div>
<div class="a" style="left:426.0px;top:135.75px;width:37px;height:37px;color:#fff;font:bold 25px/37px 'Liberation Sans';text-align:center"><span style="display:inline-block;transform:scaleX(0.9)">b</span></div>
<div class="a" style="left:975.0px;top:97.0px;width:37px;height:37px;border-radius:50%;background:#40a64e"></div>
<div class="a" style="left:975.0px;top:99.0px;width:37px;height:37px;color:#fff;font:bold 25px/37px 'Liberation Sans';text-align:center"><span style="display:inline-block;transform:scaleX(0.9)">c</span></div>
<div class="a" style="left:761.0px;top:202.1px;width:37px;height:37px;border-radius:50%;background:#40a64e"></div>
<div class="a" style="left:761.0px;top:204.1px;width:37px;height:37px;color:#fff;font:bold 25px/37px 'Liberation Sans';text-align:center"><span style="display:inline-block;transform:scaleX(0.9)">d</span></div>
</body></html>
